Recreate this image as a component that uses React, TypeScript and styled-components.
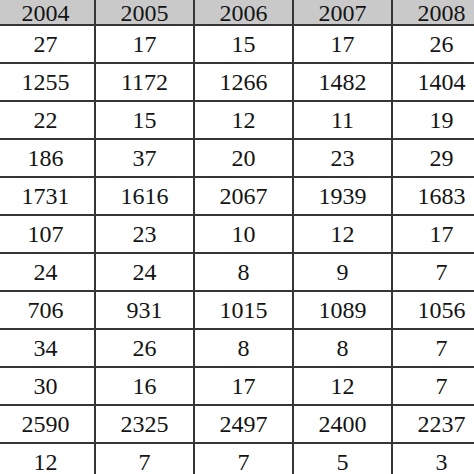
import styled, { createGlobalStyle } from "styled-components";

const GlobalStyle = createGlobalStyle`
  html, body {
    margin: 0;
    padding: 0;
    background: #ffffff;
  }
  body {
    width: 474px;
    height: 474px;
    overflow: hidden;
  }
`;

const Page = styled.div`
  width: 474px;
  height: 474px;
  overflow: hidden;
  background: #ffffff;
`;

const Grid = styled.div`
  display: grid;
  grid-template-columns: repeat(5, 97px);
  grid-template-rows: 28px;
  grid-auto-rows: 36px;
  gap: 2px;
  width: max-content;
  margin-left: -3px;
  margin-top: -4px;
  background: #353535;
  font-family: "Liberation Serif", "Times New Roman", serif;
  font-size: 24px;
  line-height: 24px;
  color: #141414;
`;

interface ICell {
  head?: boolean;
}

const Cell = styled.div<ICell>`
  display: flex;
  align-items: center;
  justify-content: center;
  padding-top: ${(props) => (props.head ? "6px" : "0")};
  background: ${(props) => (props.head ? "#c9c9c9" : "#ffffff")};
`;

const years = ["2004", "2005", "2006", "2007", "2008"];

const rows = [
  [27, 17, 15, 17, 26],
  [1255, 1172, 1266, 1482, 1404],
  [22, 15, 12, 11, 19],
  [186, 37, 20, 23, 29],
  [1731, 1616, 2067, 1939, 1683],
  [107, 23, 10, 12, 17],
  [24, 24, 8, 9, 7],
  [706, 931, 1015, 1089, 1056],
  [34, 26, 8, 8, 7],
  [30, 16, 17, 12, 7],
  [2590, 2325, 2497, 2400, 2237],
  [12, 7, 7, 5, 3],
];

function App() {
  return (
    <Page>
      <GlobalStyle />
      <Grid>
        {years.map((year) => (
          <Cell head key={year}>
            {year}
          </Cell>
        ))}
        {rows.map((row, r) =>
          row.map((value, c) => <Cell key={r + "-" + c}>{value}</Cell>)
        )}
      </Grid>
    </Page>
  );
}
export default App;
